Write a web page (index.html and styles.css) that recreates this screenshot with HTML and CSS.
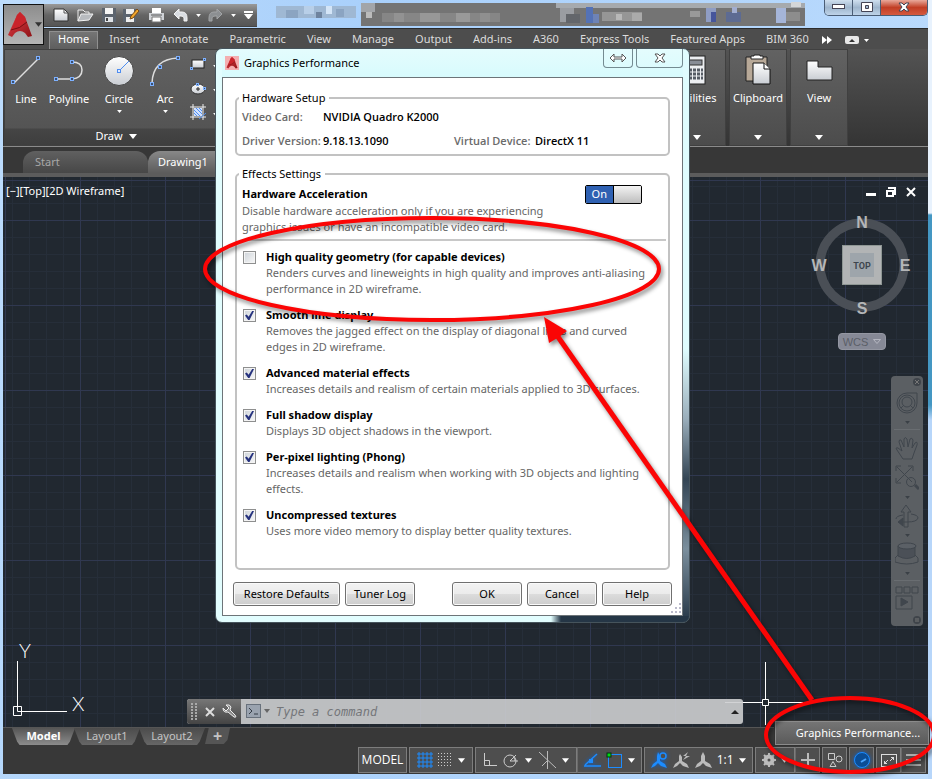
FILE: index.html
```html
<!DOCTYPE html>
<html lang="en">
<head>
<meta charset="utf-8">
<title>Graphics Performance</title>
<link rel="stylesheet" href="styles.css">
</head>
<body>
<svg class="defs" width="0" height="0" aria-hidden="true">
  <defs>
    <linearGradient id="paper" x1="0" y1="0" x2="0" y2="1"><stop offset="0" stop-color="#fff"/><stop offset="1" stop-color="#c9cdd3"/></linearGradient>
    <linearGradient id="red" x1="0" y1="0" x2="1" y2="1"><stop offset="0" stop-color="#e8434a"/><stop offset="1" stop-color="#8e1216"/></linearGradient>
    <symbol id="logo" viewBox="0 0 24 26"><path d="M12 0 17 5 24 24 20 25 17 21Q12 17 7 21L4 25 0 23 9 3Z" fill="url(#red)"/><path d="M12 0 9 3 4 17Q12 16 18 9L17 5Z" fill="#c9242b"/><path d="M3 18Q12 17 19 10" stroke="#7b0d10" fill="none"/></symbol>
    <symbol id="drop" viewBox="0 0 8 5"><path d="M0 0H8L4 5Z" fill="currentColor"/></symbol>
  </defs>
</svg>

<div class="app">
  <header class="titlebar">
    <button class="app-menu" aria-label="Application menu">
      <svg width="24" height="26"><use href="#logo"/></svg>
      <svg class="app-arrow" width="7" height="5"><use href="#drop"/></svg>
    </button>
    <div class="quick">
      <button aria-label="New"><svg width="16" height="14"><path d="M1 1H11L15 5V13H1Z" fill="url(#paper)" stroke="#333"/><path d="M11 1V5H15" fill="none" stroke="#555"/></svg></button>
      <button aria-label="Open"><svg width="17" height="14"><path d="M1 13V2H6L8 4H12V6" fill="none" stroke="#eee"/><path d="M1 13 4 6H16L12 12Z" fill="#b8bbbf" stroke="#f2f2f2"/></svg></button>
      <button aria-label="Save"><svg width="14" height="14"><path d="M0 0H14V14H1L0 13Z" fill="#5c646e"/><path d="M3 0H11V6H3Z" fill="#f5f5f5"/><path d="M3 9H11V14H3Z" fill="#dfe3e7"/><path d="M4 10H6V13H4Z" fill="#444"/></svg></button>
      <button aria-label="Save as"><svg width="17" height="15"><path d="M0 1H13V14H0Z" fill="#5c646e"/><path d="M3 1H11V6H3ZM3 9H11V14H3Z" fill="#eee"/><path d="M7 11 8 8 14 1 16 3 10 10Z" fill="#f2a72d" stroke="#7b4c17"/></svg></button>
      <button aria-label="Plot"><svg width="17" height="15"><path d="M4 0H13V5H4Z" fill="#fff"/><path d="M1 5H16V12H1Z" fill="#cfd2d6"/><path d="M3 7H14" stroke="#555"/><path d="M4 9H13V14H4Z" fill="#fff" stroke="#777"/></svg></button>
      <button aria-label="Undo"><svg width="15" height="13"><path d="M1 5 6 0V3H9Q14 3 14 9V12H11V9Q11 7 8 7H6V10Z" fill="#d9dde2" stroke="#f4f4f4"/></svg></button>
      <svg class="white" width="5" height="3"><use href="#drop"/></svg>
      <button aria-label="Redo"><svg width="15" height="13"><path d="M14 5 9 0V3H6Q1 3 1 9V12H4V9Q4 7 7 7H9V10Z" fill="#8c8f92" stroke="#a2a4a6"/></svg></button>
      <svg class="white" width="5" height="3"><use href="#drop"/></svg>
      <button aria-label="Customize"><svg class="white" width="9" height="8"><path d="M0 0H9V2H0ZM0 3H9L5 8H4Z" fill="#fff"/></svg></button>
    </div>
    <svg class="mosaic" width="545" height="25" shape-rendering="crispEdges" aria-hidden="true">
      <rect x="6" y="4" width="80" height="12" fill="#9fb8d3"/><rect x="16" y="8" width="12" height="8" fill="#8ba4c1"/><rect x="34" y="4" width="10" height="8" fill="#b8cfe8"/><rect x="46" y="10" width="6" height="6" fill="#6e839e"/><rect x="66" y="7" width="8" height="8" fill="#8ba4c1"/><rect x="56" y="4" width="6" height="8" fill="#d4e5f7"/>
      <rect x="91" y="1" width="444" height="23" fill="#747474"/><rect x="91" y="1" width="14" height="9" fill="#a2a5a9"/><rect x="96" y="10" width="6" height="6" fill="#bbb"/>
      <rect x="112" y="11" width="118" height="9" fill="#868686"/><rect x="124" y="11" width="10" height="9" fill="#929292"/><rect x="150" y="11" width="20" height="9" fill="#979797"/><rect x="186" y="11" width="14" height="9" fill="#999"/><rect x="210" y="11" width="10" height="9" fill="#8f8f8f"/>
      <rect x="286" y="1" width="249" height="5" fill="#a6aaae"/><rect x="290" y="6" width="14" height="14" fill="#9a9da2"/><rect x="296" y="12" width="14" height="9" fill="#63666b"/><rect x="316" y="5" width="7" height="16" fill="#5472b5"/><rect x="323" y="12" width="6" height="9" fill="#6e83b5"/><rect x="332" y="10" width="40" height="9" fill="#969696"/><rect x="346" y="12" width="6" height="6" fill="#b8b8b8"/><rect x="362" y="11" width="10" height="8" fill="#aaa"/>
      <rect x="420" y="9" width="10" height="6" fill="#999"/><rect x="436" y="6" width="10" height="14" fill="#8f9dc4"/><rect x="441" y="10" width="5" height="10" fill="#46559b"/><rect x="456" y="10" width="15" height="10" fill="#5d6b92"/><rect x="462" y="5" width="5" height="6" fill="#a2aed1"/><rect x="506" y="6" width="10" height="15" fill="#a5b5d9"/><rect x="516" y="10" width="14" height="9" fill="#8d8d8d"/><rect x="521" y="0" width="10" height="5" fill="#d4d6d8"/>
    </svg>
    <div class="win-buttons">
      <button aria-label="Minimize"><svg width="13" height="5"><rect x=".5" y=".5" width="12" height="4" fill="#fff" stroke="#445"/></svg></button>
      <button aria-label="Maximize"><svg width="12" height="10"><path d="M.5 .5H11.5V9.5H.5ZM4.500 3.500V6.500H7.500V3.500Z" fill="#fff" stroke="#445" fill-rule="evenodd"/></svg></button>
      <button class="win-close" aria-label="Close"><svg width="12" height="10"><path d="M1 1H4L6 3 8 1H11L8 5 11 9H8L6 7 4 9H1L4 5Z" fill="#fff" stroke="#445"/></svg></button>
    </div>
  </header>

  <nav class="tabs">
    <a class="active" href="#">Home</a><a href="#">Insert</a><a href="#">Annotate</a><a href="#">Parametric</a><a href="#">View</a><a href="#">Manage</a><a href="#">Output</a><a href="#">Add-ins</a><a href="#">A360</a><a href="#">Express Tools</a><a href="#">Featured Apps</a><a href="#">BIM 360</a>
    <button aria-label="More tabs"><svg width="10" height="8"><path d="M0 0 5 4 0 8ZM5 0 10 4 5 8Z" fill="#fff"/></svg></button>
    <button aria-label="Minimize ribbon"><svg width="24" height="9"><rect width="14" height="8" rx="2" fill="#e8e8e8"/><path d="M4 6 7 3 10 6Z" fill="#333"/><path d="M19 3H24L21.500 6Z" fill="#fff"/></svg></button>
  </nav>

  <section class="ribbon">
    <div class="panel draw">
      <div class="tools">
        <button class="tool"><svg width="32" height="34"><path d="M4 29 28 5" stroke="#ddd" stroke-width="1.500"/><g fill="#3c4f70" stroke="#7db1ff"><rect x="1.500" y="26.500" width="3" height="3"/><rect x="26.500" y="2.500" width="3" height="3"/></g></svg><span>Line</span></button>
        <button class="tool"><svg width="32" height="34"><path d="M2 25H19Q29 24 29 16T19 8" stroke="#ddd" stroke-width="1.500" fill="none"/><g fill="#3c4f70" stroke="#7db1ff"><rect x="1.500" y="23.500" width="3" height="3"/><rect x="17.500" y="23.500" width="3" height="3"/><rect x="17.500" y="6.500" width="3" height="3"/></g></svg><span>Polyline</span></button>
        <button class="tool"><svg width="32" height="34"><circle cx="16" cy="17" r="14.500" fill="url(#paper)" stroke="#444"/><path d="M16 17 26 7" stroke="#4d8df0"/><rect x="14.500" y="15.500" width="3" height="3" fill="#e0eaff" stroke="#4d8df0"/></svg><span>Circle</span><svg class="more" width="5" height="3"><use href="#drop"/></svg></button>
        <button class="tool"><svg width="32" height="34"><path d="M3 29Q4 5 29 4" stroke="#ddd" stroke-width="1.500" fill="none"/><g fill="#3c4f70" stroke="#7db1ff"><rect x="1.500" y="28.500" width="3" height="3"/><rect x="9.500" y="11.500" width="3" height="3"/><rect x="27.500" y="2.500" width="3" height="3"/></g></svg><span>Arc</span><svg class="more" width="5" height="3"><use href="#drop"/></svg></button>
        <div class="small-tools">
          <button aria-label="Rectangle"><svg width="18" height="16"><rect x="2" y="4" width="12" height="8" fill="url(#paper)" stroke="#222"/><g fill="#3c4f70" stroke="#7db1ff"><rect x=".5" y="11.500" width="2" height="2"/><rect x="13.500" y="2.500" width="2" height="2"/></g></svg></button>
          <button aria-label="Ellipse"><svg width="18" height="16"><ellipse cx="8" cy="9" rx="7" ry="5" fill="url(#paper)" stroke="#333"/><path d="M6 9H10M8 7V11" stroke="#222"/><g fill="#3c4f70" stroke="#7db1ff"><rect x="6.500" y="3.500" width="2" height="2"/><rect x="13.500" y="7.500" width="2" height="2"/></g></svg></button>
          <button aria-label="Hatch"><svg width="18" height="16"><path d="M3 0V16M13 0V16M0 3H16M0 13H16" stroke="#eee"/><path d="M4 4H12V12H4Z" fill="#cfe0ff"/><path d="M4 6 10 12M6 4 12 10M4 9 7 12M9 4 12 7M9 15 16 9" stroke="#4d8df0"/></svg></button>
        </div>
        <div class="small-arrows"><svg width="5" height="3"><use href="#drop"/></svg><svg width="5" height="3"><use href="#drop"/></svg><svg width="5" height="3"><use href="#drop"/></svg></div>
      </div>
      <button class="panel-title">Draw <svg width="8" height="5"><use href="#drop"/></svg></button>
    </div>
    <button class="panel slim"><svg width="30" height="32"><rect x="5" y="3" width="18" height="28" fill="#eceef1" stroke="#222"/><rect x="7" y="7" width="13" height="5" fill="#888d96" stroke="#333"/><path d="M7 17H21M7 21H21M7 25H21" stroke="#555b64" stroke-width="3" stroke-dasharray="3 1"/></svg><span>Utilities</span><svg class="end" width="8" height="5"><use href="#drop"/></svg></button>
    <button class="panel slim"><svg width="30" height="32"><path d="M3 4H24V28H3Z" fill="#b8a998" stroke="#222"/><path d="M8 6V3H11V2H17V3H20V6Z" fill="#fff" stroke="#222"/><path d="M10 10H21L27 16V31H10Z" fill="url(#paper)" stroke="#111"/><path d="M21 10V16H27" fill="#fff" stroke="#111"/></svg><span>Clipboard</span><svg class="end" width="8" height="5"><use href="#drop"/></svg></button>
    <button class="panel slim"><svg width="30" height="32"><path d="M3 8H14V14H28V27H3Z" fill="url(#paper)" stroke="#222"/></svg><span>View</span><svg class="end" width="8" height="5"><use href="#drop"/></svg></button>
  </section>

  <nav class="docs">
    <a class="doc" href="#"><span>Start</span></a>
    <a class="doc current" href="#"><span>Drawing1</span></a>
  </nav>

  <main class="canvas">
    <span class="view-label">[−][Top][2D Wireframe]</span>
    <div class="mdi">
      <button aria-label="Minimize drawing"><svg width="10" height="10"><path d="M0 6H10V9H0Z" fill="#fff"/></svg></button>
      <button aria-label="Restore drawing"><svg width="10" height="10"><path d="M3 2V1H9V7H8M1 4H7V9H1Z" fill="none" stroke="#fff" stroke-width="2"/></svg></button>
      <button aria-label="Close drawing"><svg width="10" height="10"><path d="M1 1 9 9M9 1 1 9" stroke="#fff" stroke-width="2"/></svg></button>
    </div>
    <div class="cube">
      <svg width="102" height="104" viewBox="0 0 102 104">
        <circle cx="51" cy="52" r="42" fill="none" stroke="#4a4f56" stroke-width="9"/>
        <rect x="31.500" y="32.500" width="39" height="39" fill="#b2b4b5" stroke="#8f9794"/><rect x="39" y="40" width="24" height="24" fill="#9ea5ab"/>
        <g fill="#b4b6b8" font-family="Liberation Sans, sans-serif" font-weight="700" font-size="16" text-anchor="middle"><text x="51" y="15">N</text><text x="51" y="101">S</text><text x="8" y="58">W</text><text x="94" y="58">E</text></g>
        <text x="51" y="56" text-anchor="middle" font-family="Roboto, sans-serif" font-weight="700" font-size="9" fill="#3e454e">TOP</text>
      </svg>
      <button class="wcs">WCS <svg width="8" height="5"><path d="M.5 .5H7.500L4 4.500Z" fill="none" stroke="#b4b6c0"/></svg></button>
    </div>
    <div class="navbar">
      <svg class="dot" width="8" height="8"><circle cx="4" cy="4" r="4" fill="#3f444a"/><path d="M2 2 6 6M6 2 2 6" stroke="#777"/></svg>
      <button aria-label="Steering wheel"><svg width="24" height="24"><path d="M12 2H22V12A10 10 0 1 1 12 2Z"/><circle cx="12" cy="12" r="8"/><circle cx="12" cy="11" r="5"/><path d="M6 17 9 14M18 17 15 14"/></svg></button>
      <svg class="tiny" width="5" height="3"><use href="#drop"/></svg>
      <hr>
      <button aria-label="Pan"><svg width="24" height="24"><path d="M8 23 2 14Q0 11 3 12L7 15 4 6Q4 3 6 4L9 11 9 3Q10 0 12 3L13 11 15 3Q17 1 18 4L17 12 20 7Q23 5 22 9L19 17 17 23Z"/></svg></button>
      <button aria-label="Zoom extents"><svg width="24" height="25"><path d="M2 2 17 17M17 2 2 17M1 6V1H6M13 1H18V6M1 13V18H6"/><circle cx="16" cy="17" r="4.500"/><path d="M20 20 24 24" stroke-width="3"/></svg></button>
      <svg class="tiny" width="5" height="3"><use href="#drop"/></svg>
      <button aria-label="Orbit"><svg width="24" height="24"><path d="M9 23V8H6L11 1 16 8H13V23Z"/><path d="M16 10Q23 11 23 14 22 18 12 18H5M8 11Q1 12 1 15"/><path d="M8 14V22L3 18Z" fill="#40464d"/></svg></button>
      <svg class="tiny" width="5" height="3"><use href="#drop"/></svg>
      <button aria-label="ShowMotion camera"><svg width="24" height="24"><path d="M3 4V14Q12 19 20 14V4Q12 0 3 4Z" fill="#4b5057"/><ellipse cx="12" cy="4" rx="9" ry="3" fill="#5b6066"/><path d="M3 13 0 16V20Q12 24 23 20V16L20 13"/></svg></button>
      <svg class="tiny" width="5" height="3"><use href="#drop"/></svg>
      <hr>
      <button aria-label="ShowMotion"><svg width="24" height="24"><path d="M1 1H7V7H1ZM9 1H15V7H9ZM17 1H23V7H17ZM1 10H17V23H1Z"/><path d="M6 12 13 16 6 20Z" fill="#40464d"/></svg></button>
      <svg class="dot last" width="8" height="8"><circle cx="4" cy="4" r="4" fill="#3f444a"/><path d="M2 3H6M2 5H6" stroke="#777"/></svg>
    </div>
    <svg class="ucs" width="90" height="92" viewBox="0 -12 90 92" fill="none" stroke="#fff"><path d="M5.500 20V70.500H55M1.500 65.500H9.500V74.500H1.500Z"/><g fill="#fff" stroke="none" font-family="Lato, sans-serif" font-weight="300" font-size="20"><text x="7" y="17">Y</text><text x="60" y="70">X</text></g></svg>
    <svg class="cross" width="78" height="64" fill="none" stroke="#fff"><path d="M0 40.500H37M44 40.500H78M40.500 0V37M40.500 44V63M37.500 37.500H43.500V43.500H37.500Z"/></svg>
    <div class="command">
      <div class="command-tools">
        <svg width="6" height="18"><path d="M1 0V18M5 0V18" stroke="#aaa" stroke-width="2" stroke-dasharray="2 1"/></svg>
        <button aria-label="Close command line"><svg width="10" height="10"><path d="M1 1 9 9M9 1 1 9" stroke="#ddd" stroke-width="2"/></svg></button>
        <button aria-label="Customize command line"><svg width="15" height="15"><path d="M1 4 4 7 7 4 4 1Q8 0 9 3L8 6 13 11Q15 14 12 13L6 8Q1 9 1 4Z" fill="#888" stroke="#eee"/></svg></button>
      </div>
      <label class="prompt" for="cmd" aria-label="Command"><svg width="24" height="15"><rect x=".5" y=".5" width="14" height="13" fill="#9aa3af" stroke="#68717c"/><path d="M3 4 6 7 3 10M8 10H12" stroke="#333b45" fill="none"/><path d="M18 5H24L21 9Z" fill="#666"/></svg></label>
      <input id="cmd" type="text" placeholder="Type a command">
      <button class="history" aria-label="History"><svg width="8" height="4"><path d="M0 4H8L4 0Z" fill="#222"/></svg></button>
    </div>
  </main>

  <nav class="layouts">
    <a class="on" href="#">Model</a><a href="#">Layout1</a><a href="#">Layout2</a><button class="plus" aria-label="New layout">+</button>
  </nav>

  <footer class="status">
    <div class="group g-model"><button>MODEL</button></div>
    <div class="group g-grid">
      <button aria-label="Grid"><svg width="16" height="16"><path d="M2 0V16M6 0V16M10 0V16M14 0V16M0 2H16M0 6H16M0 10H16M0 14H16" stroke="#1c8cff"/></svg></button>
      <button aria-label="Snap"><svg width="14" height="14"><path d="M0 .5H14M0 3.500H14M0 6.500H14M0 9.500H14M0 12.500H14" stroke="#ccc" stroke-dasharray="1 2"/></svg></button>
      <svg width="7" height="5"><use href="#drop"/></svg>
    </div>
    <div class="group g-ortho">
      <button aria-label="Ortho"><svg width="14" height="14"><path d="M1.500 0V12.500H14M1 7.500H6.500V12" stroke="#ccc" fill="none"/></svg></button>
      <button aria-label="Polar"><svg width="16" height="16"><circle cx="7" cy="9" r="6" stroke="#ccc" fill="none"/><path d="M7 9H15M7 9 13 3M11 6Q12 7 12 9" stroke="#ccc" fill="none"/></svg></button>
      <svg width="7" height="5"><use href="#drop"/></svg>
      <button aria-label="Isometric"><svg width="17" height="18"><path d="M0 1 17 17M8.500 0V18M9 9 3 15" stroke="#bbb"/></svg></button>
      <svg width="7" height="5"><use href="#drop"/></svg>
    </div>
    <div class="group g-snap joined">
      <button aria-label="Snap tracking"><svg class="glow" width="17" height="14"><path d="M0 13H17M1 12 13 1" stroke="#1c8cff" stroke-width="1.500"/><rect x="5" y="6" width="4" height="4" fill="#1c8cff"/></svg></button>
      <button aria-label="Object snap"><svg width="17" height="17"><rect x="2.500" y="2.500" width="13" height="13" fill="none" stroke="#1c8cff"/><rect x="1" y="1" width="4" height="4" fill="#0d1" stroke="#031"/></svg></button>
      <svg width="7" height="5"><use href="#drop"/></svg>
    </div>
    <div class="group g-scale">
      <button aria-label="Annotation visibility"><svg class="glow" width="17" height="17"><path d="M7 0 9 4V9L14 12 16 16 10 14 7 11 4 14 0 16 2 12 6 9V4Z" fill="#1c8cff"/><circle cx="12" cy="4" r="3" fill="#4e4e4e" stroke="#1c8cff" stroke-width="1.500"/></svg></button>
      <button aria-label="Auto scale"><svg width="17" height="17"><path d="M7 2 9 5V9L14 12 16 16 10 14 7 11 4 14 0 16 2 12 6 9V4ZM15 0 10 4H13L10 8 17 4H13Z" fill="#bbb"/></svg></button>
      <button aria-label="Annotation scale"><svg width="17" height="17"><path d="M8 0 10 4V9L15 12 17 16 11 14 8 11 5 14 0 16 2 12 6 9V4Z" fill="#bbb"/></svg></button>
      <button class="ratio">1:1 <svg width="7" height="5"><use href="#drop"/></svg></button>
    </div>
    <div class="group g-gear"><button aria-label="Workspace"><svg width="14" height="14"><circle cx="7" cy="7" r="3.500" fill="none" stroke="#bbb" stroke-width="4"/><path d="M7 0V3M7 11V14M0 7H3M11 7H14M2 2 4 4M10 10 12 12M12 2 10 4M2 12 4 10" stroke="#bbb" stroke-width="2"/></svg></button><svg width="7" height="5"><use href="#drop"/></svg></div>
    <div class="group g-icon joined"><button aria-label="Monitor"><svg width="14" height="14"><path d="M7 0V14M0 7H14" stroke="#bbb" stroke-width="2"/></svg></button></div>
    <div class="group g-icon"><button aria-label="Isolate objects"><svg width="16" height="16" fill="none" stroke="#ccc"><path d="M1.500 1.500H7.500V7.500H1.500ZM3 14.500 6 9.500 9 14.500Z"/><circle cx="12" cy="7" r="3"/></svg></button></div>
    <div class="group g-icon"><button aria-label="Hardware acceleration"><svg class="glow" width="18" height="18"><circle cx="9" cy="9" r="7.500" fill="#0b4d95" stroke="#1c8cff"/><path d="M8 11 13 8" stroke="#4aa5ff" stroke-width="2"/></svg></button></div>
    <div class="group g-icon"><button aria-label="Clean screen"><svg width="16" height="13"><rect x=".5" y=".5" width="15" height="12" fill="none" stroke="#ddd"/><path d="M3 10 7 6M3.500 7V9.500H6M13 3 9 7M10 3.500H12.500V6" stroke="#ddd" fill="none"/></svg></button></div>
    <div class="group g-icon joined"><button aria-label="Customization"><svg width="15" height="12"><path d="M0 1H15M0 6H15M0 11H15" stroke="#aaa" stroke-width="2"/></svg></button></div>
  </footer>
</div>

<section class="dialog" role="dialog" aria-labelledby="dlg-title">
  <header class="dialog-head">
    <svg class="dialog-icon" width="14" height="14"><rect width="14" height="14" fill="#f4aeb0"/><use href="#logo" x="1" y="1" width="12" height="12"/></svg>
    <h1 id="dlg-title">Graphics Performance</h1>
    <button class="glass narrow" aria-label="Resize"><svg width="18" height="10"><path d="M1 5 5 1V4H13V1L17 5 13 9V6H5V9Z" fill="#fff" stroke="#555"/></svg></button>
    <button class="glass" aria-label="Close dialog"><svg width="12" height="10"><path d="M1 1H4L6 3 8 1H11L8 5 11 9H8L6 7 4 9H1L4 5Z" fill="#fff" stroke="#555"/></svg></button>
  </header>
  <form class="dialog-body">
    <fieldset class="hardware">
      <legend>Hardware Setup</legend>
      <dl>
        <div><dt>Video Card:</dt><dd>NVIDIA Quadro K2000</dd></div>
        <div><dt>Driver Version:</dt><dd>9.18.13.1090</dd></div>
        <div class="device"><dt>Virtual Device:</dt><dd>DirectX 11</dd></div>
      </dl>
    </fieldset>
    <fieldset class="effects">
      <legend>Effects Settings</legend>
      <div class="accel">
        <div><h2>Hardware Acceleration</h2><p>Disable hardware acceleration only if you are experiencing<br>graphics issues or have an incompatible video card.</p></div>
        <button type="button" class="switch" aria-pressed="true" aria-label="Hardware Acceleration"><span>On</span><i></i></button>
      </div>
      <div class="option"><input type="checkbox" id="o1"><label for="o1"><b>High quality geometry (for capable devices)</b><span>Renders curves and lineweights in high quality and improves anti-aliasing<br>performance in 2D wireframe.</span></label></div>
      <div class="option"><input type="checkbox" id="o2" checked><label for="o2"><b>Smooth line display</b><span>Removes the jagged effect on the display of diagonal lines and curved<br>edges in 2D wireframe.</span></label></div>
      <div class="option"><input type="checkbox" id="o3" checked><label for="o3"><b>Advanced material effects</b><span>Increases details and realism of certain materials applied to 3D surfaces.</span></label></div>
      <div class="option"><input type="checkbox" id="o4" checked><label for="o4"><b>Full shadow display</b><span>Displays 3D object shadows in the viewport.</span></label></div>
      <div class="option"><input type="checkbox" id="o5" checked><label for="o5"><b>Per-pixel lighting (Phong)</b><span>Increases details and realism when working with 3D objects and lighting<br>effects.</span></label></div>
      <div class="option"><input type="checkbox" id="o6" checked><label for="o6"><b>Uncompressed textures</b><span>Uses more video memory to display better quality textures.</span></label></div>
    </fieldset>
    <div class="actions">
      <button type="button" class="btn wide">Restore Defaults</button>
      <button type="button" class="btn">Tuner Log</button>
      <span class="push"></span>
      <button type="button" class="btn">OK</button>
      <button type="button" class="btn">Cancel</button>
      <button type="button" class="btn">Help</button>
    </div>
    <svg class="grip" width="12" height="12" fill="#bbc"><path d="M9 0h2v2h-2zM9 4h2v2h-2zM9 8h2v2h-2zM5 4h2v2h-2zM5 8h2v2h-2zM1 8h2v2h-2z"/></svg>
  </form>
</section>

<button class="popup">Graphics Performance...</button>

<svg class="marks" width="932" height="779" viewBox="0 0 932 779" fill="none" stroke="#fb0505" stroke-width="4" aria-hidden="true">
  <ellipse cx="432" cy="269" rx="227" ry="51"/>
  <path d="M812 700 556 334" stroke-width="5"/>
  <path d="M544 317 567 331 559 337 549 343Z" fill="#fb0505" stroke="none"/>
  <ellipse cx="850" cy="735" rx="84" ry="37"/>
</svg>
</body>
</html>
```
FILE: styles.css
```css
* { box-sizing: border-box; }
body {
  margin: 0;
  position: relative;
  overflow-x: hidden;
  font: 11px/16px "Noto Sans", "Open Sans", sans-serif;
  color: #000;
}
button { font: inherit; color: inherit; background: none; border: 0; padding: 0; margin: 0; }
a { color: inherit; text-decoration: none; }
svg { display: block; flex: none; }
.defs { position: absolute; }

.app {
  min-height: 100vh;
  display: flex;
  flex-direction: column;
  padding: 0 4px 5px 3px;
  background:
    linear-gradient(#e8f2fd 0 213px, #4497c3 215px 405px, #b7d6fa 420px) right / 4px 100% no-repeat,
    linear-gradient(100deg, #bddcfc, #a9d0fb 35%, #bddcfd);
  color: #fff;
}

/* Title bar */
.titlebar { height: 28px; display: flex; align-items: flex-start; }
.app-menu {
  position: relative;
  z-index: 1;
  width: 41px;
  height: 41px;
  margin-top: 4px;
  padding-left: 4px;
  flex: none;
  display: flex;
  align-items: center;
  gap: 3px;
  background: linear-gradient(#8d8d8d, #b5b5b5);
  border: 1px solid #111;
  color: #333;
}
.quick {
  height: 23px;
  width: 213px;
  margin-top: 4px;
  padding: 0 4px 0 9px;
  display: flex;
  align-items: center;
  justify-content: space-between;
  flex: none;
  background: linear-gradient(#9a9a9a, #656565 50%, #555);
  border-bottom: 1px solid #444;
}
.white { color: #fff; }
.mosaic { margin: 2px 0 0 13px; }
.win-buttons {
  margin-left: auto;
  display: flex;
  height: 16px;
  flex: none;
  border: 1px solid #4a5d75;
  border-top: 0;
  border-radius: 0 0 5px 5px;
  overflow: hidden;
}
.win-buttons button {
  width: 28px;
  display: flex;
  justify-content: center;
  align-items: center;
  padding-bottom: 2px;
  background: linear-gradient(#cfdfef, #9fb6cd 50%, #bed3e8);
  border-right: 1px solid #4a5d75;
}
.win-buttons .win-close { width: 46px; border: 0; background: linear-gradient(#e9a99b, #c13e25 50%, #d5593f); }

/* Ribbon */
.tabs {
  height: 21px;
  padding: 2px 0 0 46px;
  display: flex;
  gap: 21px;
  background: #4d4d4d;
  border-top: 1px solid #2b2b2b;
  color: #dcdcdc;
  white-space: nowrap;
}
.tabs a, .tabs button { flex: none; }
.tabs .active {
  padding: 0 9px;
  margin-right: -10px;
  background: linear-gradient(#767676, #5e5e5e);
  box-shadow: inset 1px 1px #909090, inset -1px 0 #909090;
  color: #fff;
}
.tabs button { display: flex; align-items: center; margin-left: -8px; }
.ribbon {
  height: 98px;
  display: flex;
  gap: 3px;
  padding: 0 80px 0 1px;
  background: linear-gradient(#535353, #343434);
  border-bottom: 1px solid #8b8b8b;
}
.panel {
  background: linear-gradient(#626262, #4c4c4c);
  border: 1px solid #404040;
  color: #fff;
}
.panel.draw { flex: 1; display: flex; flex-direction: column; justify-content: space-between; }
.tools { display: flex; padding: 4px 0 0 1px; }
.tool {
  width: 46px;
  display: flex;
  flex-direction: column;
  align-items: center;
  line-height: 16px;
}
.tool:nth-child(1) { width: 40px; }
.tool:nth-child(3) { width: 54px; }
.tool:nth-child(4) { width: 38px; }
.tool span { padding-top: 3px; }
.more { margin-top: 3px; }
.small-tools { display: flex; flex-direction: column; gap: 8px; padding: 2px 0 0 6px; }
.small-arrows { display: flex; flex-direction: column; gap: 21px; padding: 11px 0 0 5px; }
.panel-title {
  height: 18px;
  width: 222px;
  display: flex;
  align-items: center;
  justify-content: center;
  gap: 6px;
}
.draw { background: linear-gradient(#626262, #545454 78px, #454545 79px, #3e3e3e); }
.slim {
  width: 58px;
  flex: none;
  display: flex;
  flex-direction: column;
  align-items: center;
  padding: 3px 0 5px;
}
.slim span { padding-top: 5px; }
.slim .end { margin-top: auto; }

/* Drawing tabs */
.docs {
  height: 30px;
  padding: 4px 0 0 20px;
  display: flex;
  background: #373737;
  border-bottom: 4px solid #5c5c5c;
}
.doc {
  height: 22px;
  width: 125px;
  padding: 3px 12px;
  background: linear-gradient(#606060, #474747);
  color: #a8a8a8;
  border-radius: 12px 12px 0 0;
}
.doc.current { width: 110px; padding: 3px 10px; background: linear-gradient(#888, #5c5c5c); color: #fff; }

/* Drawing area */
.canvas {
  flex: 1;
  min-height: 460px;
  position: relative;
  background:
    repeating-linear-gradient(90deg, #303850 0 1px, transparent 1px 85px) 77px 0,
    repeating-linear-gradient(#303850 0 1px, transparent 1px 85px) 0 43px,
    repeating-linear-gradient(90deg, #262e39 0 1px, transparent 1px 17px) 9px 0,
    repeating-linear-gradient(#262e39 0 1px, transparent 1px 17px) 0 9px,
    #212830;
}
.view-label { position: absolute; left: 3px; top: 6px; }
.mdi { position: absolute; right: 12px; top: 10px; display: flex; gap: 10px; }
.cube { position: absolute; right: 15px; top: 36px; display: flex; flex-direction: column; align-items: center; }
.wcs {
  width: 48px;
  height: 17px;
  margin-top: 16px;
  display: flex;
  align-items: center;
  justify-content: center;
  gap: 5px;
  border-radius: 4px;
  border: 1px solid #9497a2;
  background: #868996;
  color: #5b5f68;
  font: 11px/14px "Liberation Sans", sans-serif;
}
.navbar {
  position: absolute;
  right: 5px;
  top: 199px;
  width: 32px;
  height: 250px;
  padding: 2px 0;
  display: flex;
  flex-direction: column;
  align-items: center;
  justify-content: space-between;
  border-radius: 4px;
  background: #5b5f63;
  color: #3a4046;
}
.navbar button svg { fill: none; stroke: #40464d; }
.navbar hr { width: 26px; margin: 0; border: 0; border-top: 1px solid #696d71; }
.dot { align-self: flex-end; margin-right: 2px; }
.ucs { position: absolute; left: 9px; bottom: 6px; }
.cross { position: absolute; right: 125px; bottom: 1px; }
.command {
  position: absolute;
  left: 184px;
  right: 185px;
  bottom: 3px;
  height: 25px;
  display: flex;
  align-items: center;
  background: rgba(205, 206, 208, .9);
  border-radius: 3px;
  overflow: hidden;
}
.command-tools {
  width: 54px;
  height: 25px;
  display: flex;
  align-items: center;
  justify-content: space-between;
  padding: 0 4px;
  background: linear-gradient(#777, #444);
}
.prompt { margin-left: 5px; }
.command input {
  flex: 1;
  min-width: 0;
  margin-left: 6px;
  padding: 0;
  border: 0;
  outline: 0;
  background: none;
  font: italic 12px/16px "DejaVu Sans Mono", monospace;
}
.command input::placeholder { color: #74767a; opacity: 1; }
.history { margin-right: 4px; }

/* Layout tabs */
.layouts {
  height: 20px;
  display: flex;
  padding-left: 9px;
  background: #383838;
  border-top: 1px solid #555;
  line-height: 15px;
  color: #c4c4c4;
}
.layouts a {
  height: 17px;
  width: 66px;
  margin-right: -1px;
  text-align: center;
  background: linear-gradient(#4c4c4c, #666);
  clip-path: polygon(0 0, 100% 0, 92% 80%, 88% 100%, 12% 100%, 8% 80%);
}
.layouts .on { background: linear-gradient(#555, #8c8c8c); color: #fff; font-weight: 700; width: 63px; }
.layouts .plus {
  width: 25px;
  height: 16px;
  margin-left: 1px;
  background: #555;
  font-size: 16px;
  font-weight: 700;
  line-height: 14px;
  clip-path: polygon(15% 0, 100% 0, 90% 75%, 75% 100%, 0 100%);
}

/* Status bar */
.status {
  height: 27px;
  display: flex;
  justify-content: flex-end;
  gap: 2px;
  padding-right: 2px;
  background: #383838;
  font: 12px/16px "Open Sans", "Noto Sans", sans-serif;
}
.group {
  height: 26px;
  display: flex;
  align-items: center;
  justify-content: space-around;
  padding: 0 4px;
  border: 1px solid #7d7d7d;
  background: #4e4e4e;
}
.group.joined { margin-left: -2px; border-left-color: #6a6a6a; }
.g-model { width: 49px; padding: 0; }
.g-grid { width: 64px; }
.g-ortho { width: 102px; }
.g-snap { width: 65px; }
.g-scale { width: 109px; }
.g-gear { width: 40px; }
.g-icon { width: 25px; padding: 0; }
.ratio { display: flex; align-items: center; gap: 5px; }
.glow { overflow: visible; filter: drop-shadow(0 0 2px #0a62d0); }

/* Dialog */
.dialog {
  position: absolute;
  left: 215px;
  top: 48px;
  width: 475px;
  padding: 0 6px 6px;
  border: 1px solid #46545c;
  border-radius: 7px;
  background:
    linear-gradient(90deg, transparent 335px, #253646 345px) left bottom / 100% 6px no-repeat,
    linear-gradient(#dffcfe 300px, #9aaebb 370px, #344554 430px, #7b8f9d 500px, #253646) right top / 6px 100% no-repeat,
    #e2fdfe;
}
.dialog-head { height: 28px; display: flex; align-items: flex-start; background: linear-gradient(#e4fcfd, #d8fbfd); }
.dialog-icon { margin: 7px 5px 0 3px; }
.dialog h1 { margin: 5px auto 0 0; font-size: 11px; line-height: 17px; font-weight: 400; }
.glass {
  width: 47px;
  height: 19px;
  margin-left: 3px;
  display: flex;
  align-items: center;
  justify-content: center;
  border: 1px solid #748b91;
  border-top: 0;
  border-radius: 0 0 4px 4px;
}
.glass.narrow { width: 30px; }
.dialog-body {
  position: relative;
  padding: 11px 10px 9px 11px;
  background: #fff;
  border: 1px solid #6d7478;
}
fieldset {
  min-width: 0;
  margin: 0 2px 0 1px;
  padding: 0 5px;
  border: 2px solid #c2c2c2;
  border-radius: 5px;
}
legend { padding: 0 4px 0 3px; margin-left: -3px; line-height: 18px; }
.hardware { height: 67px; font-family: "Open Sans", "Noto Sans", sans-serif; }
.hardware legend { font-family: "Noto Sans", sans-serif; }
.hardware dl { margin: 2px 0 0; display: grid; grid-template-columns: 212px 1fr; row-gap: 8px; white-space: nowrap; }
.hardware dl div { display: grid; grid-template-columns: 81px 1fr; font-weight: 600; }
.hardware dl div:first-child { grid-column: 1 / 3; }
.hardware dt { color: #6a6a6a; }
.hardware dd { margin: 0; }
.effects { height: 405px; margin-top: 9px; }
.accel { display: flex; justify-content: space-between; margin: 2px -3px 8px 0; padding-bottom: 4px; border-bottom: 2px solid #c8c8c8; }
.accel h2 { margin: 0; font-size: 11px; line-height: 18px; }
.accel p { margin: 0; color: #666; }
.switch {
  width: 57px;
  height: 19px;
  margin-right: 24px;
  display: grid;
  grid-template-columns: 1fr 1fr;
  border: 1px solid #000;
  border-radius: 2px;
  overflow: hidden;
  color: #fff;
}
.switch span { background: #2f61b2; border-right: 1px solid #000; }
.switch i { background: linear-gradient(#f3f3f3, #bdbdbd); }
.option { display: flex; gap: 10px; margin-bottom: 10px; }
.option label { display: block; }
.option b, .option span { display: block; white-space: nowrap; }
.option span { color: #666; }
.option input {
  appearance: none;
  width: 13px;
  height: 13px;
  flex: none;
  margin: 2px 0 0 1px;
  border: 1px solid #8e8f8f;
  background: linear-gradient(135deg, #cdd3d9, #f8f8f8);
  box-shadow: inset 0 0 0 1px #f4f4f4;
}
.option input:checked::before {
  content: "";
  display: block;
  width: 9px;
  height: 9px;
  margin: 1px;
  background: #26327e;
  clip-path: polygon(0 50%, 20% 40%, 40% 65%, 80% 0, 100% 0, 50% 100%, 35% 100%);
}
.actions { display: flex; gap: 5px; margin: 12px 0 0 -1px; }
.btn {
  width: 70px;
  height: 24px;
  border: 1px solid #707070;
  border-radius: 3px;
  background: linear-gradient(#f3f3f3, #ebebeb 50%, #dcdcdc 50%, #cdcdcd);
  box-shadow: inset 0 0 0 1px #fafafa;
}
.btn.wide { width: 107px; }
.push { flex: 1; }
.grip { position: absolute; right: 0; bottom: 0; }

.popup {
  position: absolute;
  right: 2px;
  top: 720px;
  width: 156px;
  height: 26px;
  padding-left: 12px;
  border: 1px solid #333;
  box-shadow: inset 0 0 0 1px #8b8b8b;
  background: linear-gradient(#767676, #595959);
  color: #fff;
}
.marks { position: absolute; left: 0; top: 0; pointer-events: none; filter: drop-shadow(2px 3px 2px rgba(0, 0, 0, .45)); }
```
